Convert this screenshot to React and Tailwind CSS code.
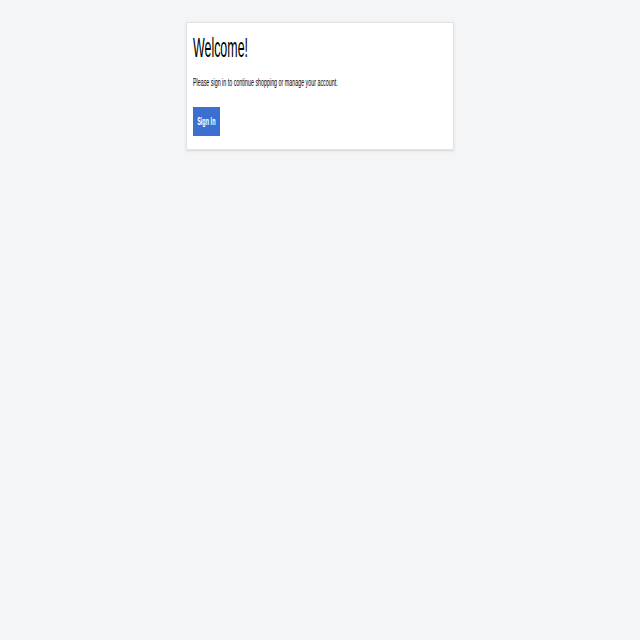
export default function App() {
  return (
    <div className="min-h-screen bg-[#f4f5f7] pt-[22px] font-['Liberation_Sans',Arial,sans-serif]">
      <div className="mx-auto w-[268px] bg-white border border-[#e2e4e7] shadow-sm px-[6px] pt-[9px] pb-[13px]">
        <h1 className="text-[27px] leading-[32px] text-black whitespace-nowrap">
          <span className="inline-block origin-left scale-x-[0.46]">Welcome!</span>
        </h1>
        <p className="mt-[12px] text-[10.7px] leading-[12px] text-black whitespace-nowrap">
          <span className="inline-block origin-left scale-x-50">
            Please sign in to continue shopping or manage your account.
          </span>
        </p>
        <button className="mt-[19px] flex h-[29px] w-[27px] items-center justify-center bg-[#3b6fd0] text-white text-[11px] font-bold whitespace-nowrap">
          <span className="inline-block scale-x-50">Sign In</span>
        </button>
      </div>
    </div>
  );
}
